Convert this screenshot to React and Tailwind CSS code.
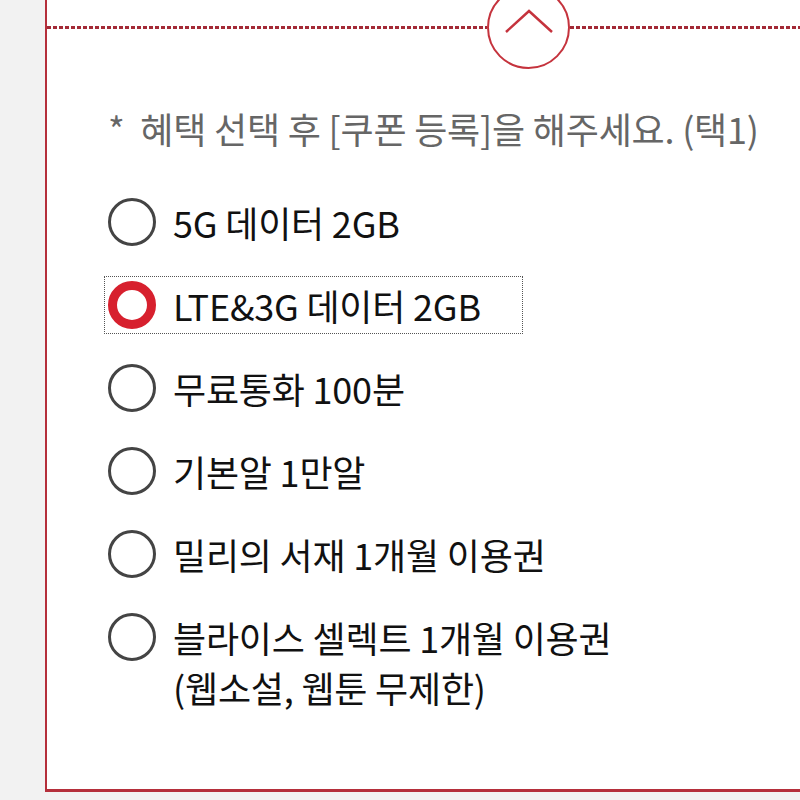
import React, { useState } from 'react';

const options = [
  ['5G 데이터 2GB'],
  ['LTE&3G 데이터 2GB'],
  ['무료통화 100분'],
  ['기본알 1만알'],
  ['밀리의 서재 1개월 이용권'],
  ['블라이스 셀렉트 1개월 이용권', '(웹소설, 웹툰 무제한)'],
];

const Radio = ({ checked }) => (
  <span
    className={`mt-[1px] h-[48px] w-[48px] shrink-0 rounded-full bg-white ${
      checked ? 'border-[9px] border-[#d7202e]' : 'border-[3px] border-[#444]'
    }`}
  />
);

export default function App() {
  const [selected, setSelected] = useState(1);

  return (
    <div
      className="h-[800px] w-[800px] overflow-hidden bg-[#f2f2f2] pb-[8px] pl-[45px]"
      style={{ fontFamily: '"Noto Sans CJK KR", "Noto Sans", sans-serif' }}
    >
      <div className="flex h-full flex-col border-b-[3px] border-l-2 border-[#b52f3b] bg-white">
        {/* divider with toggle button */}
        <div className="mt-[-14px] flex h-[83px] items-center">
          <div className="h-[3px] w-[440px] bg-[repeating-linear-gradient(90deg,#a32a36_0_4px,transparent_4px_6px)]" />
          <button className="flex h-[83px] w-[83px] shrink-0 items-center justify-center rounded-full border-2 border-[#c5333d] bg-white">
            <svg width="50" height="26" viewBox="0 0 50 26" className="mt-[-12px]">
              <path d="M2 23 L25 2 L48 23" fill="none" stroke="#c5333d" strokeWidth="2.5" />
            </svg>
          </button>
          <div className="h-[3px] flex-1 bg-[repeating-linear-gradient(90deg,#a32a36_0_4px,transparent_4px_6px)]" />
        </div>

        <p className="mt-[37px] whitespace-nowrap pl-[61px] text-[36px] leading-[44px] tracking-[-0.2px] text-[#666]">
          *&nbsp; 혜택 선택 후 [쿠폰 등록]을 해주세요. (택1)
        </p>

        <ul className="mt-[43px] flex flex-col gap-[25px] pl-[57px]">
          {options.map((lines, i) => (
            <li key={i}>
              <label
                onClick={() => setSelected(i)}
                className={`inline-flex cursor-pointer items-start gap-[17px] border p-[3px] ${
                  selected === i ? 'border-dotted border-[#555]' : 'border-transparent'
                }`}
              >
                <Radio checked={selected === i} />
                <span className="pr-[38px] text-[36px] leading-[50px] tracking-[-0.2px] text-[#111]">
                  {lines.map((l, j) => (
                    <span key={j} className="block whitespace-nowrap">
                      {l}
                    </span>
                  ))}
                </span>
              </label>
            </li>
          ))}
        </ul>
      </div>
    </div>
  );
}
